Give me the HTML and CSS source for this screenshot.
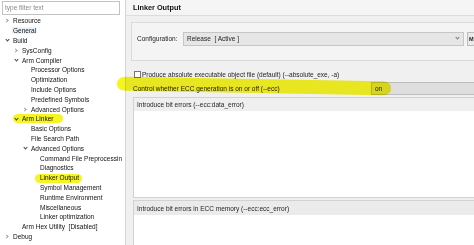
FILE: index.html
```html
<!DOCTYPE html>
<html lang="en">
<head>
    <meta charset="UTF-8">
    <title>Linker Output</title>
    <link rel="stylesheet" href="styles.css">
</head>
<body>
    <div class="window">
        <aside class="nav">
            <div class="filter">type filter text</div>
            <ul class="tree">
                <li class="d0"><i class="tw shut"></i>Resource</li>
                <li class="d0"><i class="tw"></i><span class="hover">General</span></li>
                <li class="d0"><i class="tw open"></i>Build</li>
                <li class="d1"><i class="tw shut"></i>SysConfig</li>
                <li class="d1"><i class="tw open"></i>Arm Compiler</li>
                <li class="d2"><i class="tw"></i>Processor Options</li>
                <li class="d2"><i class="tw"></i>Optimization</li>
                <li class="d2"><i class="tw"></i>Include Options</li>
                <li class="d2"><i class="tw"></i>Predefined Symbols</li>
                <li class="d2"><i class="tw shut"></i>Advanced Options</li>
                <li class="d1"><i class="tw open"></i>Arm Linker</li>
                <li class="d2"><i class="tw"></i>Basic Options</li>
                <li class="d2"><i class="tw"></i>File Search Path</li>
                <li class="d2"><i class="tw open"></i>Advanced Options</li>
                <li class="d3"><i class="tw"></i>Command File Preprocessin</li>
                <li class="d3"><i class="tw"></i>Diagnostics</li>
                <li class="d3"><i class="tw"></i>Linker Output</li>
                <li class="d3"><i class="tw"></i>Symbol Management</li>
                <li class="d3"><i class="tw"></i>Runtime Environment</li>
                <li class="d3"><i class="tw"></i>Miscellaneous</li>
                <li class="d3"><i class="tw"></i>Linker optimization</li>
                <li class="d1"><i class="tw"></i>Arm Hex Utility&nbsp; [Disabled]</li>
                <li class="d0"><i class="tw shut"></i>Debug</li>
            </ul>
        </aside>

        <main class="page">
            <div class="title">Linker Output</div>
            <div class="content">
                <div class="config">
                    <span class="cfg-label">Configuration:</span>
                    <div class="select">Release&nbsp; [ Active ]<i class="caret"></i></div>
                    <div class="manage">M</div>
                </div>
                <div class="opts">
                    <div class="check"><i class="box"></i>Produce absolute executable object file (default) (--absolute_exe, -a)</div>
                    <div class="ecc">
                        <span class="ecc-label">Control whether ECC generation is on or off (--ecc)</span>
                        <div class="combo">on</div>
                    </div>
                    <section class="group g1">
                        <div class="ghead">Introduce bit errors (--ecc:data_error)</div>
                    </section>
                    <section class="group g2">
                        <div class="ghead">Introduce bit errors in ECC memory (--ecc:ecc_error)</div>
                    </section>
                </div>
            </div>
        </main>

        <!-- highlighter marks drawn over the screenshot -->
        <div class="marker m-linker"></div>
        <div class="marker m-output"></div>
        <div class="marker m-ecc"></div>
    </div>
</body>
</html>
```

FILE: styles.css
```css
body {
    margin: 0;
    font-family: "Liberation Sans", Arial, sans-serif;
    font-size: 6.5px;
    color: #111;
    background: #fff;
}
.window {
    position: relative;
    display: flex;
    width: 474px;
    height: 245px;
    overflow: hidden;
}

/* left tree */
.nav {
    flex: 0 0 125px;
    border-right: 1px solid #d6d6d6;
    background: #fff;
    overflow: hidden;
}
.filter {
    margin: 1px 5px 0 2px;
    height: 12px;
    line-height: 12px;
    border: 1px solid #c2c2c2;
    padding-left: 2px;
    color: #8a8a8a;
}
.tree {
    list-style: none;
    margin: 1px 0 0;
    padding: 0;
}
.tree li {
    display: flex;
    align-items: center;
    height: 9.8px;
    white-space: nowrap;
}
.tree .d0 { padding-left: 4px; }
.tree .d1 { padding-left: 13px; }
.tree .d2 { padding-left: 22px; }
.tree .d3 { padding-left: 31px; }
.tw {
    flex: 0 0 9px;
    height: 9px;
    position: relative;
}
.tw.shut::before,
.tw.open::before {
    content: "";
    position: absolute;
    width: 2px;
    height: 2px;
    border-right: 1px solid #9a9a9a;
    border-bottom: 1px solid #9a9a9a;
}
.tw.shut::before {
    left: 1px;
    top: 3px;
    transform: rotate(-45deg);
}
.tw.open::before {
    left: 2px;
    top: 2.5px;
    border-color: #444;
    transform: rotate(45deg);
}
.hover {
    background: #e9f3fc;
    padding: 0 1px;
    margin-left: -1px;
}

/* right page */
.page {
    flex: 1;
    display: flex;
    flex-direction: column;
    background: #f0f0f0;
    color: #1e1e1e;
}
.title {
    height: 15px;
    line-height: 15px;
    padding-left: 7px;
    font-weight: bold;
    font-size: 7.3px;
    color: #111;
    background: #f5f5f5;
    border-bottom: 1px solid #dcdcdc;
}
.content {
    margin: 6px 0 0 5px;
}
.config {
    display: flex;
    align-items: flex-start;
    padding: 9px 0 0 5px;
    box-sizing: border-box;
    height: 39px;
    border: 1px solid #dadada;
    border-right: none;
    background: #f4f4f4;
}
.cfg-label {
    flex: 0 0 46px;
    line-height: 14px;
}
.select {
    position: relative;
    flex: 0 0 281px;
    height: 14px;
    line-height: 12px;
    box-sizing: border-box;
    border: 1px solid #c6c6c6;
    background: #e6e6e6;
    padding-left: 3px;
}
.caret {
    position: absolute;
    right: 4px;
    top: 3px;
    width: 2px;
    height: 2px;
    border-right: 1px solid #777;
    border-bottom: 1px solid #777;
    transform: rotate(45deg);
}
.manage {
    flex: 0 0 8px;
    margin-left: 3px;
    height: 14px;
    line-height: 12px;
    box-sizing: border-box;
    border: 1px solid #bcbcbc;
    border-right: none;
    background: #e9e9e9;
    padding-left: 1px;
    font-size: 5.5px;
    font-weight: bold;
}
.opts {
    padding-top: 9px;
}
.check {
    display: flex;
    align-items: center;
    height: 9px;
    padding-left: 3px;
    white-space: nowrap;
}
.box {
    width: 5px;
    height: 5px;
    border: 1px solid #777;
    background: #fff;
    margin-right: 1px;
}
.ecc {
    display: flex;
    align-items: center;
    height: 13px;
    margin-top: 3px;
    padding-left: 2px;
}
.ecc-label {
    flex: 0 0 238px;
    white-space: nowrap;
}
.combo {
    flex: 1;
    height: 13px;
    line-height: 11px;
    box-sizing: border-box;
    border: 1px solid #bdbdbd;
    border-right: none;
    background: #dedede;
    padding-left: 3px;
}
.group {
    margin: 2px 0 0 2px;
    border: 1px solid #d2d2d2;
    border-right: none;
    background: #fff;
}
.g1 { height: 99px; }
.g2 { height: 60px; margin-top: 2px; }
.ghead {
    height: 13px;
    line-height: 13px;
    padding-left: 3px;
    background: #efefef;
    white-space: nowrap;
}
.g2 .ghead {
    height: 14px;
    line-height: 15px;
    background: #ebebeb;
}

/* yellow highlighter strokes */
.marker {
    position: absolute;
    background: #f7f423;
    mix-blend-mode: multiply;
    border-radius: 5px / 4px;
}
.m-linker {
    left: 13px;
    top: 114px;
    width: 50px;
    height: 9px;
}
.m-output {
    left: 35px;
    top: 174px;
    width: 47px;
    height: 9px;
}
.m-ecc {
    left: 117px;
    top: 79px;
    width: 274px;
    height: 14px;
    border-radius: 8px / 6px;
    transform: rotate(1deg);
}
```
